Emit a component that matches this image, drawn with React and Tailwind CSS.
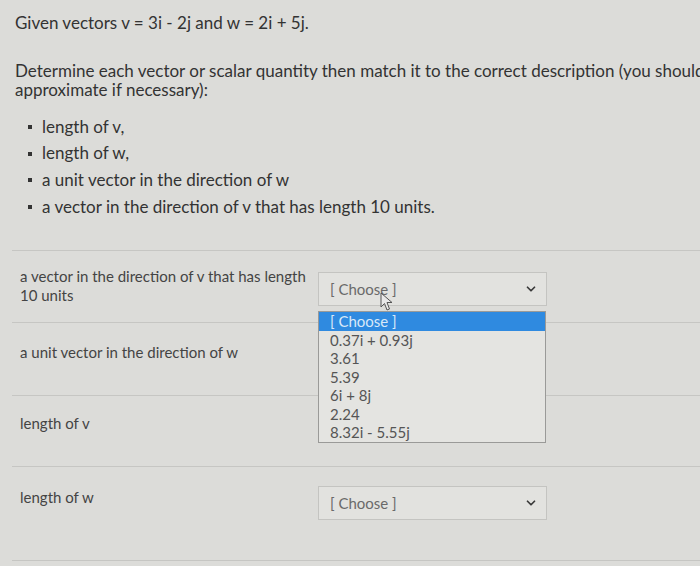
import { ChevronDown } from "lucide-react";

const options = [
  "0.37i + 0.93j",
  "3.61",
  "5.39",
  "6i + 8j",
  "2.24",
  "8.32i - 5.55j",
];

const bullets = [
  "length of v,",
  "length of w,",
  "a unit vector in the direction of w",
  "a vector in the direction of v that has length 10 units.",
];

const Select = ({ open }) => (
  <div className="relative w-[229px]">
    <div className="flex h-[34px] items-center justify-between border border-[#c4c4c1] bg-[#e2e2df] pl-[11px] pr-[8px] text-[15px] text-[#6a6a6a]">
      <span>[ Choose ]</span>
      <ChevronDown size={14} strokeWidth={3} className="text-[#3a3a3a]" />
    </div>
    {open && (
      <>
        {/* mouse pointer */}
        <svg
          className="absolute left-[62px] top-[20px] z-20"
          width="14"
          height="20"
          viewBox="0 0 14 20"
        >
          <path
            d="M1 1 L1 15 L4.5 11.5 L7 18 L9.5 17 L7 10.5 L12 10.5 Z"
            fill="#e8e8e8"
            stroke="#555"
            strokeWidth="1"
          />
        </svg>
        <div className="absolute left-0 top-[39px] z-10 w-[228px] border border-[#9a9a98] bg-[#e4e4e1] text-[15px] leading-[18.5px] text-[#555]">
          <div className="bg-[#2f8ae0] pl-[11px] text-[#d8e8f8]">[ Choose ]</div>
          {options.map((o) => (
            <div key={o} className="pl-[11px]">
              {o}
            </div>
          ))}
        </div>
      </>
    )}
  </div>
);

const rows = [
  { label: "a vector in the direction of v that has length 10 units", h: "h-[72px]", pt: "pt-[21px]", lbl: "w-[292px] -mt-[5px]", open: true },
  { label: "a unit vector in the direction of w", h: "h-[73px]", pt: "pt-[20px]", lbl: "", select: false },
  { label: "length of v", h: "h-[71px]", pt: "pt-[20px]", lbl: "-mt-[2px]", select: false },
  { label: "length of w", h: "h-[94px]", pt: "pt-[19px]", lbl: "pt-[2px]" },
];

export default function App() {
  return (
    <div
      className="h-[566px] w-[700px] overflow-hidden bg-[#dcdcd9] text-[#333]"
      style={{ fontFamily: "Lato, 'Open Sans', sans-serif" }}
    >
      <div className="pl-[15px] pt-[10px] text-[17px]">
        <p className="whitespace-nowrap">Given vectors v = 3i - 2j and w = 2i + 5j.</p>
        <p className="mt-[25px] whitespace-nowrap leading-[19px]">
          Determine each vector or scalar quantity then match it to the correct description (you should
        </p>
        <p className="whitespace-nowrap leading-[19px]">approximate if necessary):</p>
        <ul className="mt-[15px] pl-[13px] leading-[26.7px]">
          {bullets.map((b) => (
            <li key={b} className="flex items-center gap-[10px]">
              <span className="h-[4px] w-[4px] bg-[#333]" />
              <span>{b}</span>
            </li>
          ))}
        </ul>
      </div>

      <div className="ml-[12px] mt-[30px] border-t border-[#c6c6c3]">
        {rows.map((r) => (
          <div
            key={r.label}
            className={`flex items-start border-b border-[#c6c6c3] ${r.pt} ${r.h}`}
          >
            <div className="w-[306px] pl-[8px] text-[15px] leading-[19px] text-[#444]">
              <p className={r.lbl}>{r.label}</p>
            </div>
            {r.select !== false && <Select open={r.open} />}
          </div>
        ))}
      </div>
    </div>
  );
}
